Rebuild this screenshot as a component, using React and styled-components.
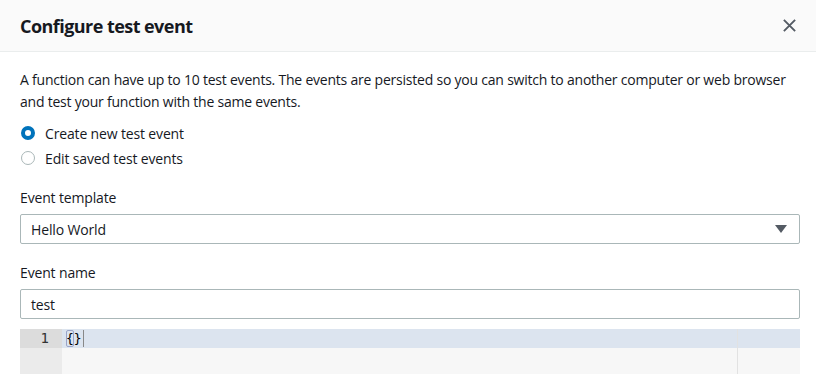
import React from "react";
import styled, { createGlobalStyle } from "styled-components";

const GlobalStyle = createGlobalStyle`
  html, body {
    margin: 0;
    padding: 0;
    background: #ffffff;
  }
  body {
    font-family: "Open Sans", "Liberation Sans", sans-serif;
    color: #16191f;
  }
`;

const Modal = styled.div`
  width: 816px;
  height: 374px;
  overflow: hidden;
  background: #ffffff;
`;

const Header = styled.div`
  height: 52px;
  box-sizing: border-box;
  display: flex;
  align-items: center;
  justify-content: space-between;
  padding: 0 17px 0 20px;
  background: #fafafa;
  border-bottom: 1px solid #eaeded;
`;

const Title = styled.h2`
  margin: 0;
  font-size: 18px;
  font-weight: 700;
  color: #16191f;
  letter-spacing: -0.55px;
`;

const CloseButton = styled.button`
  border: none;
  background: none;
  padding: 0;
  width: 20px;
  height: 20px;
  display: flex;
  align-items: center;
  justify-content: center;
  color: #545b64;
  cursor: pointer;
`;

const Body = styled.div`
  padding: 17px 16px 0 20px;
  display: flex;
  flex-direction: column;
`;

const Intro = styled.p`
  margin: 0;
  font-size: 14px;
  line-height: 22px;
  letter-spacing: -0.22px;
`;

const RadioGroup = styled.div`
  margin-top: 9px;
  display: flex;
  flex-direction: column;
  gap: 3px;
`;

const RadioRow = styled.label`
  display: flex;
  align-items: center;
  gap: 10px;
  height: 22px;
  font-size: 14px;
  letter-spacing: -0.15px;
`;

const RadioDot = styled.span`
  width: 14px;
  height: 14px;
  box-sizing: border-box;
  border-radius: 50%;
  margin-left: 1px;
  border: ${(p) => (p.$checked ? "4px solid #0073bb" : "1px solid #aab7b8")};
  background: #ffffff;
`;

const Field = styled.div`
  display: flex;
  flex-direction: column;
  margin-top: ${(p) => p.$top}px;
`;

const Label = styled.div`
  font-size: 14px;
  line-height: 22px;
  letter-spacing: -0.15px;
  margin-bottom: 5px;
`;

const InputBox = styled.div`
  height: 30px;
  box-sizing: border-box;
  border: 1px solid #aab7b8;
  border-radius: 2px;
  display: flex;
  align-items: center;
  justify-content: space-between;
  padding: 0 12px 0 10px;
  font-size: 14px;
  letter-spacing: -0.15px;
  color: #16191f;
`;

const Caret = styled.span`
  width: 0;
  height: 0;
  border-left: 6px solid transparent;
  border-right: 6px solid transparent;
  border-top: 8px solid #545b64;
`;

const Editor = styled.div`
  margin-top: 10px;
  display: flex;
  height: 60px;
  font-family: "DejaVu Sans Mono", "Liberation Mono", monospace;
  font-size: 13px;
`;

const Gutter = styled.div`
  width: 42px;
  background: #ebebeb;
  display: flex;
  flex-direction: column;
`;

const GutterCell = styled.div`
  height: 19px;
  line-height: 19px;
  text-align: right;
  padding-right: 13px;
  font-size: 14px;
  color: #333333;
  background: ${(p) => (p.$active ? "#dcdcdc" : "transparent")};
`;

const Content = styled.div`
  flex: 1;
  background: #f7f7f7;
  position: relative;
`;

const ActiveLine = styled.div`
  height: 19px;
  line-height: 19px;
  background: #dce4ef;
  padding-left: 4px;
  display: flex;
  align-items: center;
  color: #000000;
`;

const Brace = styled.span`
  outline: 1px solid #9aa4c8;
  outline-offset: -1px;
  border-radius: 2px;
  height: 17px;
  line-height: 17px;
  display: inline-block;
`;

const Cursor = styled.span`
  width: 1px;
  height: 17px;
  background: #888888;
  margin-left: 1px;
`;

const PrintMargin = styled.div`
  position: absolute;
  top: 0;
  bottom: 0;
  left: 675px;
  width: 1px;
  background: #e2e2e2;
`;

export default function App() {
  return (
    <Modal>
      <GlobalStyle />
      <Header>
        <Title>Configure test event</Title>
        <CloseButton aria-label="Close">
          <svg width="15" height="15" viewBox="0 0 16 16" fill="none">
            <path d="M2 2l12 12M14 2L2 14" stroke="currentColor" strokeWidth="2" />
          </svg>
        </CloseButton>
      </Header>
      <Body>
        <Intro>
          A function can have up to 10 test events. The events are persisted so you can switch to another computer or web browser
          and test your function with the same events.
        </Intro>
        <RadioGroup>
          <RadioRow>
            <RadioDot $checked />
            Create new test event
          </RadioRow>
          <RadioRow>
            <RadioDot />
            Edit saved test events
          </RadioRow>
        </RadioGroup>
        <Field $top={18}>
          <Label>Event template</Label>
          <InputBox>
            Hello World
            <Caret />
          </InputBox>
        </Field>
        <Field $top={18}>
          <Label>Event name</Label>
          <InputBox>test</InputBox>
        </Field>
        <Editor>
          <Gutter>
            <GutterCell $active>1</GutterCell>
          </Gutter>
          <Content>
            <ActiveLine>
              <Brace>{"{"}</Brace>
              <span>{"}"}</span>
              <Cursor />
            </ActiveLine>
            <PrintMargin />
          </Content>
        </Editor>
      </Body>
    </Modal>
  );
}
